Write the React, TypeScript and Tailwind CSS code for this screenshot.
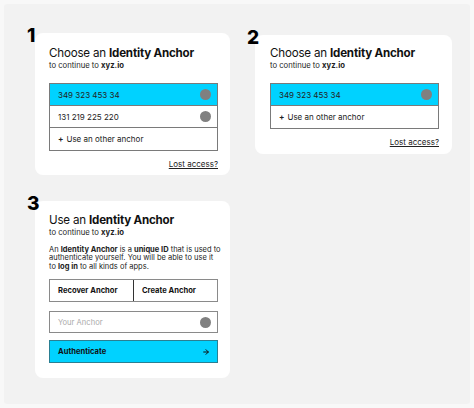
import { ArrowRight } from "lucide-react";

function Dot() {
  return <span className="w-[11px] h-[11px] rounded-full bg-[#808080] shrink-0" />;
}

function Step({ n }: { n: string }) {
  return (
    <span className="absolute -left-[8px] -top-[7px] text-[19px] leading-[19px] font-extrabold text-black">
      {n}
    </span>
  );
}

function Heading({ verb }: { verb: string }) {
  return (
    <div>
      <h2 className="text-[11.6px] leading-[14px] text-[#111] tracking-[-0.2px]">
        {verb} <span className="font-bold">Identity Anchor</span>
      </h2>
      <p className="text-[7.7px] leading-[10px] text-[#222] mt-[1px]">
        to continue to <span className="font-bold">xyz.io</span>
      </p>
    </div>
  );
}

function AnchorList({ anchors }: { anchors: string[] }) {
  return (
    <div className="border border-[#7a7a7a] bg-white">
      {anchors.map((a, i) => (
        <div
          key={a}
          className={`h-[22px] flex items-center justify-between pl-[8px] pr-[6px] border-b border-[#7a7a7a] text-[8px] text-[#222] ${
            i === 0 ? "bg-[#00d2ff]" : ""
          }`}
        >
          <span>{a}</span>
          <Dot />
        </div>
      ))}
      <div className="h-[22px] flex items-center pl-[8px] text-[8px] text-[#222]">
        <span className="font-bold mr-[3px]">+</span>Use an other anchor
      </div>
    </div>
  );
}

function ChooseCard({ n, anchors, className }: { n: string; anchors: string[]; className: string }) {
  return (
    <div className={`relative bg-white rounded-[8px] ${className}`}>
      <Step n={n} />
      <Heading verb="Choose an" />
      <div className="mt-[12px]">
        <AnchorList anchors={anchors} />
      </div>
      <div className="flex justify-end mt-[8px]">
        <span className="text-[8px] leading-[10px] underline text-[#222]">Lost access?</span>
      </div>
    </div>
  );
}

export default function App() {
  return (
    <div
      className="w-[474px] h-[408px] bg-[#f8f8f8] p-[4px]"
      style={{ fontFamily: "Inter, 'Noto Sans', sans-serif" }}
    >
      <div className="h-full bg-[#f2f2f2] rounded-[3px] pt-[29px] pl-[31px]">
        <div className="flex items-start gap-[25px]">
          <ChooseCard
            n="1"
            anchors={["349 323 453 34", "131 219 225 220"]}
            className="w-[195px] h-[142px] pl-[14px] pr-[12px] pt-[13px]"
          />
          <div className="pt-[2px]">
            <ChooseCard
              n="2"
              anchors={["349 323 453 34"]}
              className="w-[197px] h-[119px] pl-[15px] pr-[13px] pt-[11px]"
            />
          </div>
        </div>

        <div className="relative mt-[26px] w-[195px] h-[177px] bg-white rounded-[8px] pl-[14px] pr-[12px] pt-[12px]">
          <Step n="3" />
          <Heading verb="Use an" />
          <p className="mt-[8px] -mr-[6px] text-[7.5px] leading-[8.4px] text-[#222]">
            An <b>Identity Anchor</b> is a <b>unique ID</b> that is used to
            <br />
            authenticate yourself. You will be able to use it
            <br />
            to <b>log in</b> to all kinds of apps.
          </p>
          <div className="mt-[8px] flex h-[23px] border border-[#8a8a8a] text-[7.6px] font-bold text-[#111]">
            <div className="flex-1 flex items-center pl-[8px] border-r border-[#333]">Recover Anchor</div>
            <div className="flex-1 flex items-center pl-[8px]">Create Anchor</div>
          </div>
          <div className="mt-[9px] flex h-[22px] items-center justify-between border border-[#8a8a8a] pl-[8px] pr-[6px] text-[7.6px] text-[#aaa]">
            <span>Your Anchor</span>
            <Dot />
          </div>
          <div className="mt-[7px] flex h-[23px] items-center justify-between border border-[#2a7f92] bg-[#00d2ff] pl-[8px] pr-[7px] text-[7.6px] font-bold text-[#111]">
            <span>Authenticate</span>
            <ArrowRight size={8} strokeWidth={3} />
          </div>
        </div>
      </div>
    </div>
  );
}
